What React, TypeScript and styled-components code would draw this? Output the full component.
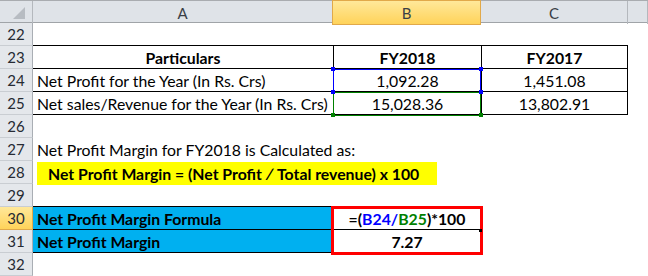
import styled, { createGlobalStyle } from "styled-components";

const GlobalStyle = createGlobalStyle`
  html, body {
    margin: 0;
    padding: 0;
    background: #ffffff;
  }
  body {
    font-family: "Lato", "Open Sans", sans-serif;
    overflow: hidden;
  }
`;

const COLS = "33px 300px 148px 147px 20px";

function App() {
  return (
    <>
      <GlobalStyle />
      <Sheet>
        <HeaderRow>
          <Corner>
            <svg width="33" height="23" viewBox="0 0 33 23">
              <polygon points="25,6 25,18 13,18" fill="#b7bcc2" />
            </svg>
          </Corner>
          <ColHead>A</ColHead>
          <ColHead $active>B</ColHead>
          <ColHead>C</ColHead>
          <ColHead />
        </HeaderRow>

        <Row>
          <RowHead>22</RowHead>
        </Row>

        <Row>
          <RowHead>23</RowHead>
          <Cell $top $bottom $align="center" $bold>Particulars</Cell>
          <Cell $top $bottom $left $align="center" $bold>FY2018</Cell>
          <Cell $top $bottom $left $right $align="center" $bold>FY2017</Cell>
        </Row>

        <Row>
          <RowHead>24</RowHead>
          <Cell $bottom>Net Profit for the Year (In Rs. Crs)</Cell>
          <Cell $bottom $left $align="center">1,092.28</Cell>
          <Cell $bottom $left $right $align="center">1,451.08</Cell>
        </Row>

        <Row>
          <RowHead>25</RowHead>
          <Cell $bottom>Net sales/Revenue for the Year (In Rs. Crs)</Cell>
          <Cell $bottom $left $align="center">15,028.36</Cell>
          <Cell $bottom $left $right $align="center">13,802.91</Cell>
        </Row>

        <Row>
          <RowHead>26</RowHead>
        </Row>

        <Row>
          <RowHead>27</RowHead>
          <Cell $span={3}>Net Profit Margin for FY2018 is Calculated as:</Cell>
        </Row>

        <Row>
          <RowHead>28</RowHead>
          <Cell $span={3}>
            <Highlight>Net Profit Margin = (Net Profit ∕ Total revenue) x 100</Highlight>
          </Cell>
        </Row>

        <Row>
          <RowHead>29</RowHead>
        </Row>

        <Row>
          <RowHead $active>30</RowHead>
          <Cell $top $bottom $bg="#00b0f0" $bold>Net Profit Margin Formula</Cell>
          <Cell $top $bottom $align="center" $bold>
            =(<Ref $color="#0000ff">B24/</Ref><Ref $color="#008000">B25</Ref>)*100
          </Cell>
        </Row>

        <Row>
          <RowHead>31</RowHead>
          <Cell $bottom $bg="#00b0f0" $bold>Net Profit Margin</Cell>
          <Cell $bottom $align="center" $bold>7.27</Cell>
        </Row>

        <Row>
          <RowHead>32</RowHead>
        </Row>

        <Selection $x={333} $y={69} $w={148} $h={24} $color="#0000ff" />
        <Selection $x={333} $y={92} $w={148} $h={24} $color="#008000" />
        <Handle $x={331} $y={67} $color="#0000ff" />
        <Handle $x={479} $y={67} $color="#0000ff" />
        <Handle $x={331} $y={113} $color="#008000" />
        <Handle $x={479} $y={113} $color="#008000" />
        <Handle $x={331} $y={90} $color="#0000ff" />
        <Handle $x={479} $y={90} $color="#0000ff" />

        <RedBox />
        <FillHandle />
      </Sheet>
    </>
  );
}

export default App;

const Sheet = styled.div`
  position: relative;
  width: 648px;
  height: 276px;
  overflow: hidden;
  display: flex;
  flex-direction: column;
  background: #ffffff;
  color: #000000;
`;

const Row = styled.div`
  display: grid;
  grid-template-columns: ${COLS};
  height: 23px;
  flex: none;
`;

const HeaderRow = styled(Row)`
  background: #dfe3e8;
  border-top: 1px solid #a9acb0;
  border-bottom: 1px solid #a0a4a8;
  box-sizing: border-box;
`;

const Corner = styled.div`
  border-right: 1px solid #b4b8bd;
  box-sizing: border-box;
  svg {
    display: block;
  }
`;

const ColHead = styled.div<{ $active?: boolean }>`
  display: flex;
  align-items: center;
  justify-content: center;
  box-sizing: border-box;
  border-right: 1px solid #b4b8bd;
  font-family: "Lato", sans-serif;
  font-size: 15px;
  color: #3a3f46;
  background: ${(p) =>
    p.$active ? "linear-gradient(#ffe89a, #ffd35a)" : "transparent"};
  ${(p) => p.$active && "border: 1px solid #e1a94a; margin: -1px 0 -1px -1px;"}
`;

const RowHead = styled.div<{ $active?: boolean }>`
  display: flex;
  align-items: center;
  justify-content: center;
  box-sizing: border-box;
  background: ${(p) =>
    p.$active ? "linear-gradient(#ffe89a, #ffd35a)" : "#e4e7eb"};
  border-right: 1px solid ${(p) => (p.$active ? "#e1a94a" : "#a9aeb4")};
  border-bottom: 1px solid ${(p) => (p.$active ? "#e1a94a" : "#c9cdd2")};
  font-size: 15px;
  color: #262b33;
`;

const Cell = styled.div<{
  $top?: boolean;
  $bottom?: boolean;
  $left?: boolean;
  $right?: boolean;
  $align?: "left" | "center";
  $bold?: boolean;
  $bg?: string;
  $span?: number;
}>`
  display: flex;
  align-items: center;
  justify-content: ${(p) => (p.$align === "center" ? "center" : "flex-start")};
  box-sizing: border-box;
  padding: 0 4px;
  ${(p) => p.$span && `grid-column: span ${p.$span};`}
  background: ${(p) => p.$bg ?? "transparent"};
  border-top: ${(p) => (p.$top ? "1px solid #000" : "none")};
  border-bottom: ${(p) => (p.$bottom ? "1px solid #000" : "none")};
  border-left: ${(p) => (p.$left ? "1px solid #000" : "none")};
  border-right: ${(p) => (p.$right ? "1px solid #000" : "none")};
  margin-top: ${(p) => (p.$top ? "-1px" : "0")};
  height: ${(p) => (p.$top ? "24px" : "23px")};
  font-size: 15.8px;
  font-weight: ${(p) => (p.$bold ? 700 : 400)};
  white-space: nowrap;
  overflow: visible;
`;

const Highlight = styled.div`
  display: flex;
  align-items: center;
  width: 400px;
  height: 23px;
  margin-top: 2px;
  padding-left: 11px;
  box-sizing: border-box;
  background: #ffff00;
  font-weight: 700;
`;

const Ref = styled.span<{ $color: string }>`
  color: ${(p) => p.$color};
`;

const Selection = styled.div<{ $x: number; $y: number; $w: number; $h: number; $color: string }>`
  position: absolute;
  left: ${(p) => p.$x}px;
  top: ${(p) => p.$y}px;
  width: ${(p) => p.$w}px;
  height: ${(p) => p.$h}px;
  box-sizing: border-box;
  border: 1px solid ${(p) => p.$color};
  pointer-events: none;
`;

const Handle = styled.div<{ $x: number; $y: number; $color: string }>`
  position: absolute;
  left: ${(p) => p.$x}px;
  top: ${(p) => p.$y}px;
  width: 4px;
  height: 4px;
  background: ${(p) => p.$color};
`;

const RedBox = styled.div`
  position: absolute;
  left: 331px;
  top: 206px;
  width: 152px;
  height: 49px;
  box-sizing: border-box;
  border: 3px solid #ff0000;
`;

const FillHandle = styled.div`
  position: absolute;
  left: 479px;
  top: 229px;
  width: 3px;
  height: 3px;
  background: #000;
`;
